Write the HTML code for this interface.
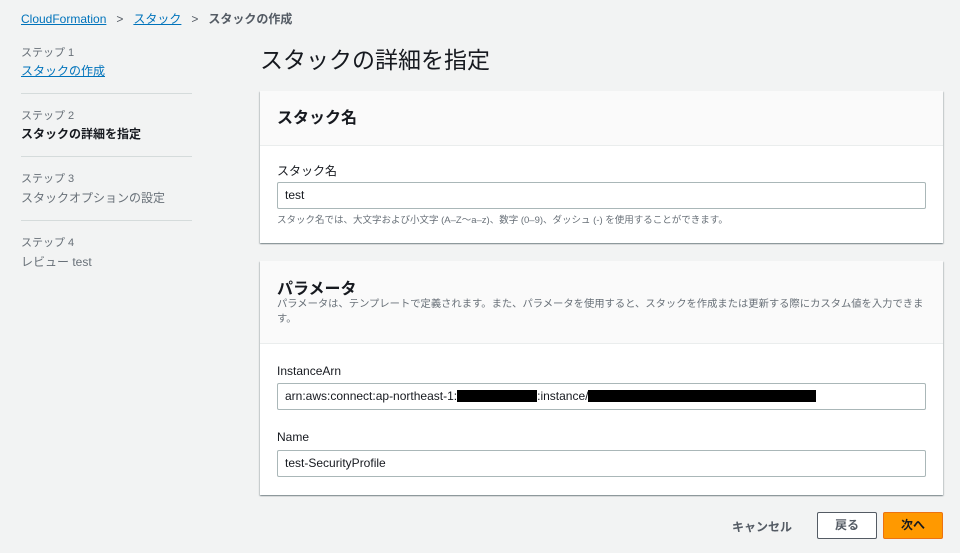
<!DOCTYPE html>
<html><head><meta charset="utf-8"><style>
*{margin:0;padding:0;box-sizing:border-box}
body{width:960px;height:553px;background:#f2f3f3;font-family:"Liberation Sans","Noto Sans CJK JP",sans-serif;color:#16191f;position:relative;overflow:hidden}
.a{position:absolute;white-space:nowrap}
.link{color:#0073bb;text-decoration:underline}
.step{font-size:11px;color:#687078}
.hr{position:absolute;left:21px;width:171px;height:1px;background:#d5dbdb}
.panel{position:absolute;left:260px;width:683px;background:#fff;box-shadow:0 1px 1px rgba(0,28,36,.3),1px 1px 1px rgba(0,28,36,.15),-1px 1px 1px rgba(0,28,36,.15)}
.ph{background:#fafafa;border-bottom:1px solid #eaeded}
.inp{position:absolute;left:17px;width:649px;height:27px;border:1px solid #aab7b8;border-radius:2px;font-size:12px;padding:5px 7px;background:#fff}
.lbl{position:absolute;left:17px;font-size:12px}
.blk{display:inline-block;background:#000;height:12px;vertical-align:-2px}
.btn{position:absolute;top:512px;height:27px;width:60px;font-size:12px;font-weight:bold;text-align:center;line-height:25px;border-radius:2px}
</style></head><body>
<div class="a" style="left:21px;top:10px;font-size:12px"><span class="link">CloudFormation</span><span style="color:#545b64;margin:0 10px">&gt;</span><span class="link">スタック</span><span style="color:#545b64;margin:0 10px">&gt;</span><span style="color:#545b64;font-weight:bold">スタックの作成</span></div>

<div class="a step" style="left:21px;top:44px">ステップ 1</div>
<div class="a link" style="left:21px;top:62px;font-size:12px">スタックの作成</div>
<div class="hr" style="top:93px"></div>
<div class="a step" style="left:21px;top:107px">ステップ 2</div>
<div class="a" style="left:21px;top:125px;font-size:12px;font-weight:bold">スタックの詳細を指定</div>
<div class="hr" style="top:156px"></div>
<div class="a step" style="left:21px;top:170px">ステップ 3</div>
<div class="a" style="left:21px;top:189px;font-size:12px;color:#687078">スタックオプションの設定</div>
<div class="hr" style="top:220px"></div>
<div class="a step" style="left:21px;top:234px">ステップ 4</div>
<div class="a" style="left:21px;top:253px;font-size:12px;color:#687078">レビュー test</div>

<div class="a" style="left:260px;top:41px;font-size:23px">スタックの詳細を指定</div>

<div class="panel" style="top:91px;height:152px">
<div class="ph" style="height:55px"><div class="a" style="left:17px;top:13px;font-size:16px;font-weight:bold">スタック名</div></div>
<div class="lbl" style="top:71px">スタック名</div>
<div class="inp" style="top:91px">test</div>
<div class="a" style="left:17px;top:121px;font-size:9.5px;color:#687078">スタック名では、大文字および小文字 (A–Z〜a–z)、数字 (0–9)、ダッシュ (-) を使用することができます。</div>
</div>

<div class="panel" style="top:261px;height:234px">
<div class="ph" style="height:83px">
<div class="a" style="left:17px;top:14px;font-size:16px;font-weight:bold">パラメータ</div>
<div class="a" style="left:17px;top:36px;font-size:10.3px;color:#687078;line-height:15px;white-space:normal;width:655px">パラメータは、テンプレートで定義されます。また、パラメータを使用すると、スタックを作成または更新する際にカスタム値を入力できます。</div>
</div>
<div class="lbl" style="top:103px">InstanceArn</div>
<div class="inp" style="top:122px">arn:aws:connect:ap-northeast-1:<span class="blk" style="width:80px"></span>:instance/<span class="blk" style="width:228px"></span></div>
<div class="lbl" style="top:169px">Name</div>
<div class="inp" style="top:189px">test-SecurityProfile</div>
</div>

<div class="a" style="left:732px;top:518px;font-size:12px;font-weight:bold;color:#545b64">キャンセル</div>
<div class="btn" style="left:817px;border:1px solid #545b64;background:#fff;color:#545b64">戻る</div>
<div class="btn" style="left:883px;background:#ff9900;color:#16191f;border:1px solid #ec7211">次へ</div>
</body></html>
